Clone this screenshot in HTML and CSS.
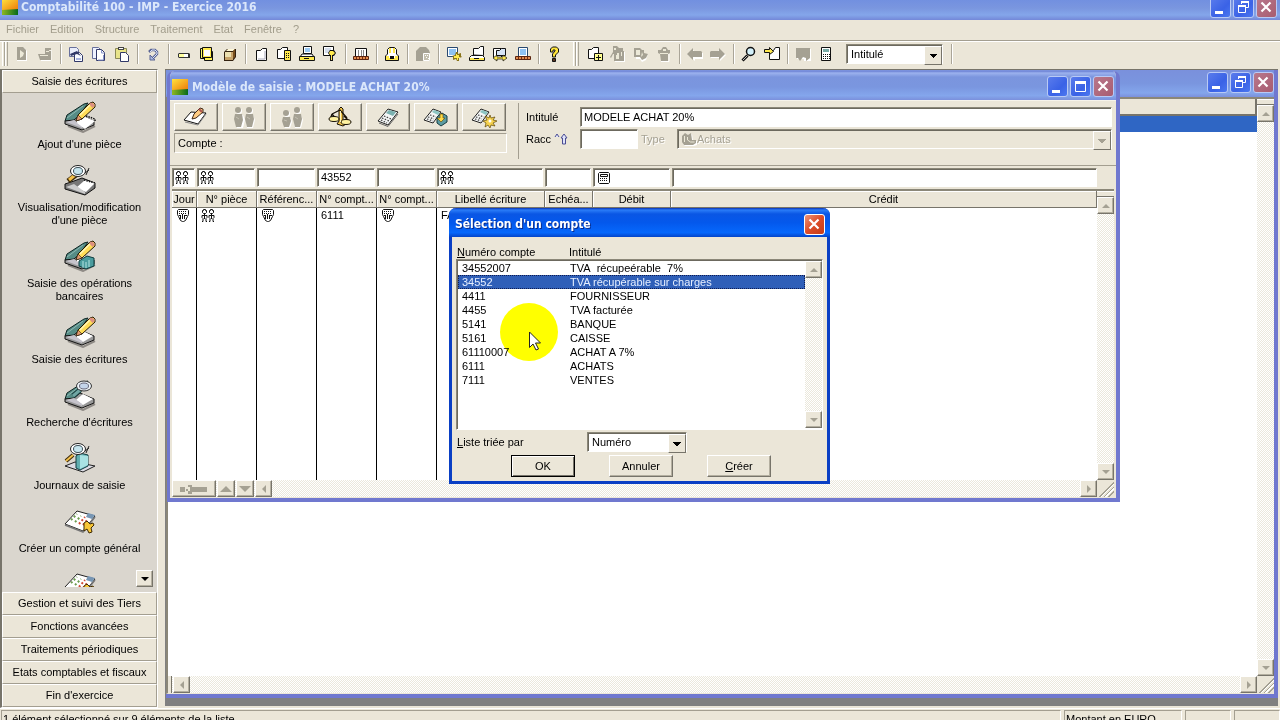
FILE: index.html
```html
<!DOCTYPE html>
<html lang="fr">
<head>
    <meta charset="UTF-8">
    <meta name="viewport" content="width=device-width, initial-scale=1.0">
    <title>Comptabilité 100 - IMP - Exercice 2016</title>
    <link rel="stylesheet" href="styles.css">
</head>
<body>
    <!-- Icon library -->
    <svg class="defs" aria-hidden="true">
        <defs>
            <linearGradient id="logoTop" x1="0" y1="0" x2="1" y2="1">
                <stop offset="0" stop-color="#ffe23c"/><stop offset="1" stop-color="#ee7a08"/>
            </linearGradient>
            <linearGradient id="logoBottom" x1="0" y1="0" x2="1" y2="0">
                <stop offset="0" stop-color="#8fb820"/><stop offset="1" stop-color="#066a1c"/>
            </linearGradient>
        </defs>
        <symbol id="logo" viewBox="0 0 16 16"><path d="M0 0h16v11H0z" fill="url(#logoTop)"/><path d="M0 11l16-1v6H0z" fill="url(#logoBottom)"/></symbol>
        <symbol id="win-min" viewBox="0 0 21 21"><path d="M5 14h8v3H5z" fill="#fff"/></symbol>
        <symbol id="win-max" viewBox="0 0 21 21"><path d="M5.5 6h10v9.500h-10z" fill="none" stroke="#fff"/><path d="M5 5h11v3H5z" fill="#fff"/></symbol>
        <symbol id="win-restore" viewBox="0 0 21 21"><path d="M8.500 7V4.500h7v6H13M5 9h7.500v6.500h-7V9" fill="none" stroke="#fff"/><path d="M5 8h8v2H5zM8 4h8v2H8z" fill="#fff"/></symbol>
        <symbol id="win-close" viewBox="0 0 21 21"><path d="M5.500 5.500l9 9m0-9l-9 9" stroke="#fff" stroke-width="2.200" fill="none"/></symbol>

        <symbol id="i-new" viewBox="0 0 16 16"><path d="M4 2h6l3 3v10H3V3z" fill="#fff"/><path d="M3 1h6l3 3v10H3z" fill="#a5a193"/><path d="M6 4l4 3-1 3-3 2z" fill="#ece9d8"/></symbol>
        <symbol id="i-open" viewBox="0 0 16 16"><path d="M2 8.500h9M4 14.500h10V4" stroke="#fff" fill="none"/><path d="M8 2h6v2h-2v1h2v9H3L1 8h7z" fill="#a5a193"/><path d="M3 9h8v1H3zM9 5h3v1H9z" fill="#ece9d8"/></symbol>
        <symbol id="i-cut" viewBox="0 0 16 16"><path d="M1.500 1.500h7l2 2v7h-9z" fill="#e8ecfa" stroke="#68709c"/><path d="M6.500 6.500h5l3 3v6h-8z" fill="#f8faff" stroke="#303868"/><path d="M2 8l7-3 4 5-4-2-6 2z" fill="#303868"/><path d="M8 12h5v2H8z" fill="#a8b4e0"/></symbol>
        <symbol id="i-copy" viewBox="0 0 16 16"><path d="M1.500 1.500h6l3 3v8h-9z" fill="#eef2ff" stroke="#68709c"/><path d="M5.500 3.500h5l3 3v8h-8z" fill="#fff" stroke="#303868"/><path d="M10.500 4v3h3M12.500 9v5H7" fill="none" stroke="#8894cc"/></symbol>
        <symbol id="i-paste" viewBox="0 0 16 16"><path d="M1.500 2.500h11v10h-11z" fill="#e8e48a" stroke="#8a8858"/><path d="M4 1h6v3H4z" fill="#444"/><path d="M5 2h4v1H5z" fill="#fff"/><path d="M6.500 6.500h5l3 3v6h-8z" fill="#fff" stroke="#303868"/></symbol>
        <symbol id="i-undo" viewBox="0 0 16 16"><path d="M4 6l2-2h4l2 2v2l-4 4" fill="none" stroke="#5a6494" stroke-width="2.500"/><path d="M5 6l2-2h3l2 2v2l-4 4" fill="none" stroke="#d8e2f8"/><path d="M5 9v5h5z" fill="#aab8e0" stroke="#5a6494"/></symbol>
        <symbol id="i-pill" viewBox="0 0 16 16"><path d="M3 7h10l1 1v4H3l-1-1V8z" fill="#333"/><path d="M3 8h5v3H3z" fill="#ffffa0"/><path d="M8 8h4v3H8z" fill="#fff"/></symbol>
        <symbol id="i-cards" viewBox="0 0 16 16"><path d="M1.500 2.500h9v10h-9z" fill="#ffff70" stroke="#111"/><path d="M5.500 5.500h8v9h-8z" fill="#fff352" stroke="#111"/><path d="M3.500 1.500h9v10h-9z" fill="#ffe94e" stroke="#111"/><path d="M5 4h6v6H5z" fill="#fff"/></symbol>
        <symbol id="i-box" viewBox="0 0 16 16"><path d="M2 6l3-3h9v8l-3 4H2z" fill="#332210"/><path d="M3 6h8v8H3z" fill="#c8a46a"/><path d="M4 5l2-2h7l-2 2z" fill="#fff8d8"/><path d="M11 5l2-2v8l-2 2z" fill="#79501e"/><path d="M3 6h6v5H3z" fill="#ece0b0"/></symbol>
        <symbol id="i-folder" viewBox="0 0 16 16"><path d="M3.500 4.500h4l2-2h4v12h-10z" fill="#fff" stroke="#111"/><path d="M5 13h7V5" fill="none" stroke="#aab"/></symbol>
        <symbol id="i-folder-calc" viewBox="0 0 16 16"><path d="M1.500 3.500h3l2-2h5v11h-10z" fill="#fff" stroke="#111"/><path d="M8.500 4.500h6v10h-6z" fill="#ffe94e" stroke="#111"/><path d="M10 7h1v1h-1zm2 0h1v1h-1zm-2 2h1v1h-1zm2 0h1v1h-1zm-2 2h1v1h-1zm2 0h1v1h-1z" fill="#111"/></symbol>
        <symbol id="i-print" viewBox="0 0 16 16"><path d="M4.500 .500h8v7h-8z" fill="#fff" stroke="#111"/><path d="M6 2h5v4H6z" fill="#9ccaf4"/><path d="M3 8h10l2 3H1z" fill="#fff" stroke="#111"/><path d="M.500 10.500h15v4H.500z" fill="#ffe94e" stroke="#111"/><path d="M5 12h5v1H5z" fill="#111"/></symbol>
        <symbol id="i-key" viewBox="0 0 16 16"><path d="M1.500 .500h10v9h-10z" fill="#fff" stroke="#111"/><path d="M3 2h6v5H3z" fill="#d4ddeb"/><path d="M8 4h4l2 3-2 3h-1v5H8v-5L6 7z" fill="#111"/><path d="M8 5h3l2 2-2 2H8L7 7zM9 9h1v5H9z" fill="#ffe94e"/></symbol>
        <symbol id="i-bank" viewBox="0 0 16 16"><path d="M2.500 2.500h11v8h-11z" fill="#fff" stroke="#111"/><path d="M5.500 4v6M8.500 4v6M10.500 4v6" stroke="#888"/><path d="M.500 10.500h15v3H.500z" fill="#e28a4c" stroke="#5a2410"/><path d="M3.500 11v2m3-2v2m3-2v2m3-2v2" stroke="#702c10"/></symbol>
        <symbol id="i-car" viewBox="0 0 16 16"><path d="M3.500 8V3.500l2-2h5l2 2V8l2 2v4.500h-13V10z" fill="#fff" stroke="#111"/><path d="M5 2h2v5H5zm4 0h2v5H9z" fill="#ffe84b"/><path d="M2 10h3v2H2zm9 0h3v2h-3z" fill="#ffe84b"/><path d="M2 12h12v2H2z" fill="#ffe84b"/><path d="M6 10h4v3H6z" fill="#111"/></symbol>
        <symbol id="i-globe" viewBox="0 0 16 16"><path d="M5 1h6l3 3 1 3v8H5H1V5z" fill="#a5a193"/><path d="M8.500 7.500h6v7h-6z" fill="#c4c0b0" stroke="#fff"/><path d="M10 9h1v1h-1zm2 0h1v1h-1zm-1 2h1v1h-1zm2 1h1v1h-1z" fill="#fff"/></symbol>
        <symbol id="i-screen-gear" viewBox="0 0 16 16"><path d="M1.500 1.500h10v9h-10z" fill="#fff" stroke="#29486e"/><path d="M3 3h7v6H3z" fill="#8fc2f2"/><path d="M10 6h2v2l3-1v3l1 1-3 1v3h-2l-1-2-3 1v-3l-1-1 3-1z" fill="#8a7418"/><path d="M10 8h1v1h2v2h1v1h-2v2h-1v-2H8v-2h2z" fill="#ffe94e"/></symbol>
        <symbol id="i-screen-print" viewBox="0 0 16 16"><path d="M4.500 9V2.500h5l2-2h3v9z" fill="#fff" stroke="#111"/><path d="M2.500 9.500h11l2 2v3H.500v-3z" fill="#fff" stroke="#111"/><path d="M1 12h14v2H1z" fill="#ffe84b"/><path d="M5 12h5v1H5z" fill="#111"/></symbol>
        <symbol id="i-copy-arrow" viewBox="0 0 16 16"><path d="M1.500 2.500h8v9h-8z" fill="#fff" stroke="#111"/><path d="M4.500 4.500h3l2-2h4v7h-9z" fill="#d7e4f5" stroke="#111"/><path d="M1 12l4-3v2h6V9l4 3-4 3v-2H5v2z" fill="#ffe94e" stroke="#111" stroke-width=".700"/></symbol>
        <symbol id="i-screen-bank" viewBox="0 0 16 16"><path d="M3.500 1.500h9v9h-9z" fill="#fff" stroke="#29486e"/><path d="M5 3h6v6H5z" fill="#8fc2f2"/><path d="M.500 10.500h15v3H.500z" fill="#e28a4c" stroke="#5a2410"/><path d="M3.500 11v2m3-2v2m3-2v2m3-2v2" stroke="#702c10"/></symbol>
        <symbol id="i-help" viewBox="0 0 16 16"><path d="M4.500 5V3l2-2h4l2 2v3L9.500 9v2h-3V8L9 5V4H7v2H4.500z" fill="#ffe53b" stroke="#111"/><path d="M6.500 12.500h3v3h-3z" fill="#5a3420" stroke="#111"/></symbol>
        <symbol id="i-add" viewBox="0 0 16 16"><path d="M1.500 3.500h3l2-2h5v11h-10z" fill="#fff" stroke="#111"/><path d="M7.500 7.500h8v7h-8z" fill="#ffff90" stroke="#111"/><path d="M11 9h1v2h2v1h-2v2h-1v-2H9v-1h2z" fill="#111"/></symbol>
        <symbol id="i-g-view" viewBox="0 0 16 16"><path d="M6 6h9v10H5V9z" fill="#fff"/><path d="M3 0h4l2 2h4v3h1v10H4V8H3l-2 4-1-1 3-5z" fill="#a5a193"/><path d="M4 2h2v2H4zM7 7h2v6H6V9h1zm4-1h1v4h-1z" fill="#ece9d8"/></symbol>
        <symbol id="i-g-edit" viewBox="0 0 16 16"><path d="M3 4h8v4h4l-2 6-4 2-2-3H3z" fill="#fff"/><path d="M1 2h6l2 2h2v3l4 1-2 4-4 2-2-3H1z" fill="#a5a193"/><path d="M3 4h4v5H3zM9 6l1 3-2 2z" fill="#ece9d8"/></symbol>
        <symbol id="i-g-trash" viewBox="0 0 16 16"><path d="M5 15.500h8V8" fill="none" stroke="#fff"/><path d="M2 4h3l2-3h3l2 3h2v3l-2 1v7H5l-1-7-2-1z" fill="#a5a193"/><path d="M7 3h3v2H7zM4 7h8v1H4z" fill="#ece9d8"/></symbol>
        <symbol id="i-left" viewBox="0 0 16 16"><path d="M1 9l6-5v3h9v6H8v2z" fill="#fff"/><path d="M0 8l6-6v3h8l1 1v5H6v3z" fill="#a5a193"/></symbol>
        <symbol id="i-right" viewBox="0 0 16 16"><path d="M16 9l-6 6v-3H1V8l9-4z" fill="#fff"/><path d="M15 8L9 2v3H1L0 6v5h9v3z" fill="#a5a193"/></symbol>
        <symbol id="i-search" viewBox="0 0 16 16"><path d="M1.500 14.500l5-5" stroke="#111" stroke-width="3"/><circle cx="9.500" cy="5.500" r="4" fill="#d3f0fa" stroke="#111" stroke-width="1.500"/><path d="M2 14l4-4" stroke="#bbb"/></symbol>
        <symbol id="i-goto" viewBox="0 0 16 16"><path d="M5.500 4.500h4l2-3h4v12h-10z" fill="#fff" stroke="#111"/><path d="M.500 3.500h5v-2l4 4-4 3v-2h-5z" fill="#ffe94e" stroke="#111"/></symbol>
        <symbol id="i-g-book" viewBox="0 0 16 16"><path d="M2 3h14v12H9v-2H2z" fill="#fff"/><path d="M1 2h14v10l-4 3v-3l-3-1-3 4-2-3H1z" fill="#a5a193"/></symbol>
        <symbol id="i-calc" viewBox="0 0 16 16"><path d="M3.500 1.500h9v13h-9z" fill="#fff" stroke="#111"/><path d="M5 3h6v3H5z" fill="#78aaa6"/><path d="M5 8h1v1H5zm2 0h1v1H7zm2 0h1v1H9zm2 0h1v1h-1zm-6 2h1v1H5zm2 0h1v1H7zm2 0h1v1H9zm2 0h1v1h-1zm-6 2h1v1H5zm2 0h1v1H7zm2 0h1v1H9zm2 0h1v1h-1z" fill="#111"/></symbol>

        <!-- Sidebar icons -->
        <symbol id="book" viewBox="0 0 32 32"><path d="M4 25l15 6 12-6" fill="none" stroke="#8f8b86" stroke-width="2"/><path d="M1 20l2-6L20 3l4-1-8 12-4 6z" fill="#568c86" stroke="#0c2422"/><path d="M3 17L19 5" stroke="#8fbab4"/><path d="M1 20l9-1 6-5 14 6v4l-12 5L1 23z" fill="#999" stroke="#111"/><path d="M12 21l7-6 10 5-10 6z" fill="#fff"/><path d="M2 21l8-2 8 6v2z" fill="#c6c4cc"/></symbol>
        <symbol id="pencil" viewBox="0 0 32 32"><path d="M12 20l2-6L26 2l3-1 2 2v3L18 18z" fill="#ffdc56" stroke="#241a06"/><path d="M16 14L26 4" stroke="#fff6b8" stroke-width="1.500"/><path d="M25 3l2-1.500 3.500 1.500v2l-2 2z" fill="#dc8f80"/><path d="M12 20l2-6 4 4z" fill="#e39a72" stroke="#241a06" stroke-width=".600"/></symbol>
        <symbol id="lens" viewBox="0 0 32 32"><path d="M21 9l4-3M22 11l3-7" stroke="#222"/><ellipse cx="14" cy="7" rx="7.500" ry="5.500" fill="#fff" stroke="#222"/><ellipse cx="14" cy="7" rx="4.500" ry="3.500" fill="#c6e5ee" stroke="#3c5058"/></symbol>
        <symbol id="s-add" viewBox="0 0 32 32"><use href="#book"/><path d="M13 22l8-6 10 4-10 8z" fill="#fff"/><path d="M22 15l9 3v3" fill="none" stroke="#111" stroke-width="1.500" stroke-dasharray="1.500 1"/><use href="#pencil"/></symbol>
        <symbol id="s-view" viewBox="0 0 32 32"><path d="M1 20l9-3 8-3 13 5v5l-10 7L1 25z" fill="#777" stroke="#111"/><path d="M12 24l9-8 10 3-9 9z" fill="#fff"/><path d="M20 16l11 3" stroke="#111" stroke-width="1.500" stroke-dasharray="1.500 1"/><path d="M2 23l8-3 11 8v2z" fill="#ccc"/><path d="M4 17l8-6" stroke="#3b2807" stroke-width="5"/><path d="M5 16l6-5" stroke="#f2c04c" stroke-width="3"/><use href="#lens"/></symbol>
        <symbol id="s-bank" viewBox="0 0 32 32"><use href="#book"/><path d="M15 21l8-5 7 2v8l-8 3-7-3z" fill="#4b9c9e" stroke="#0d3b3d"/><path d="M19 21v7m3-6v6m3-8v7" stroke="#b7e5e3"/><use href="#pencil"/></symbol>
        <symbol id="s-write" viewBox="0 0 32 32"><use href="#book"/><use href="#pencil"/></symbol>
        <symbol id="s-search" viewBox="0 0 32 32"><use href="#book"/><path d="M9 17l7-6" stroke="#183f3f" stroke-width="5"/><path d="M9 17l7-6" stroke="#70a6a4" stroke-width="3"/><ellipse cx="20" cy="7" rx="7.500" ry="5" fill="#eef5fa" stroke="#333"/><ellipse cx="20" cy="7" rx="4.500" ry="3" fill="#c4d5ea" stroke="#667"/></symbol>
        <symbol id="s-journal" viewBox="0 0 32 32"><path d="M1 24l10-4 20 4-12 6z" fill="#dcdce4" stroke="#222"/><path d="M12 14l4-3 8 2v11l-8 4-4-2z" fill="#60aeb0" stroke="#133c40"/><path d="M16 13l8 1v9l-8 4z" fill="#a9e3e3"/><path d="M2 19l7-6" stroke="#3b2807" stroke-width="4"/><path d="M2 19l7-6" stroke="#f2c04c" stroke-width="2"/><use href="#lens"/></symbol>
        <symbol id="s-account" viewBox="0 0 32 32"><path d="M1 19L13 6l18 5-12 15z" fill="#fff" stroke="#222"/><path d="M1 20l18 7 12-15" fill="none" stroke="#777" stroke-width="1.500"/><path d="M7 15l6-6M11 17l6-6" stroke="#6d9c50" stroke-dasharray="2 2" stroke-width="2"/><path d="M15 19l6-7M19 20l5-6" stroke="#d04a35" stroke-dasharray="2 2" stroke-width="2"/><path d="M24 8l7 2-3 4-6-2z" fill="#7796b4"/><path d="M20 18l3-2 3 3 3-1 1 2-3 3 1 4-3 1-2-4-3 2z" fill="#f8c636" stroke="#3d2a05"/></symbol>

        <!-- Model window icons -->
        <symbol id="m-pencil" viewBox="0 0 26 22"><path d="M1 14L8 6l15 1-8 11z" fill="#fff" stroke="#111"/><path d="M2 16l13 3 8-11" fill="none" stroke="#888"/><path d="M9 13l2-5 6-6 3 1v3l-7 6z" fill="#ffcc83" stroke="#402818"/><path d="M16 3l3 3" stroke="#ad5550" stroke-width="2"/></symbol>
        <symbol id="m-people" viewBox="0 0 26 22"><g fill="#fff"><circle cx="8" cy="5" r="3"/><circle cx="19" cy="5" r="3"/><path d="M5 9h7l2 5-2 8H6l-2-8zM16 9h6l2 5-2 8h-6l-1-8z"/></g><g fill="#a5a193"><circle cx="7" cy="4" r="3"/><circle cx="18" cy="4" r="3"/><path d="M4 8h7l1 6-2 7H5l-2-8zM15 8h7l1 5-2 8h-5l-2-8z"/></g><path d="M5 11l3 2M16 11l3 2" stroke="#c4c0b2"/></symbol>
        <symbol id="m-people2" viewBox="0 0 26 22"><g fill="#fff"><circle cx="8" cy="8" r="3"/><circle cx="19" cy="5" r="3"/><path d="M5 12h7l1 4-2 6H6l-2-6zM16 9h6l2 5-2 8h-6l-1-8z"/></g><g fill="#a5a193"><circle cx="7" cy="7" r="3"/><circle cx="18" cy="4" r="3"/><path d="M4 11h7l1 4-2 6H5l-2-6zM15 8h7l1 5-2 8h-5l-2-8z"/></g><path d="M5 14l3 1M16 11l3 2" stroke="#c4c0b2"/></symbol>
        <symbol id="m-scale" viewBox="0 0 26 22"><path d="M12 3l2-2 2 2v11l3 4-3 2-6-2 2-3z" fill="#f5c84c" stroke="#161006"/><path d="M5 8l8-4 7 8M5 8l-2 6M5 8l5 6M17 10l6 6" fill="none" stroke="#161006" stroke-width="1.300"/><ellipse cx="7" cy="13" rx="5" ry="2.500" fill="#fff2a0" stroke="#161006"/><ellipse cx="19" cy="16" rx="5" ry="2.500" fill="#fff2a0" stroke="#161006"/><path d="M13.500 5v11" stroke="#fff6c0"/></symbol>
        <symbol id="m-calc" viewBox="0 0 26 22"><path d="M3 15L13 3l10 3-10 13z" fill="#f4f6f6" stroke="#222"/><path d="M4 17l9 3.500L23 8" fill="none" stroke="#666"/><path d="M11 7l3-3 7 2-3 4z" fill="#7bb2b0"/><path d="M7 12l7 3M9 10l7 3M6 14l6 3" stroke="#444" stroke-dasharray="1.500 1.500" stroke-width="1.300"/></symbol>
        <symbol id="m-calc-book" viewBox="0 0 26 22"><path d="M1 14L10 3l8 3-8 11z" fill="#f4f6f6" stroke="#222"/><path d="M9 6l2-2 6 2-2 3z" fill="#8cc5c3"/><path d="M5 11l6 2M7 9l6 2M4 13l6 2" stroke="#444" stroke-dasharray="1.500 1.500" stroke-width="1.300"/><path d="M14 11l5-4 5 3v6l-6 4-4-3z" fill="#5b9ba1" stroke="#173b40"/><path d="M17 8h3v4h2l-4 4-4-4h3z" fill="#ffda48" stroke="#5a4300" stroke-width=".600"/></symbol>
        <symbol id="m-calc-gear" viewBox="0 0 26 22"><path d="M1 14L10 3l8 3-8 11z" fill="#f4f6f6" stroke="#222"/><path d="M9 6l2-2 6 2-2 3z" fill="#8cc5c3"/><path d="M5 11l6 2M7 9l6 2M4 13l6 2" stroke="#444" stroke-dasharray="1.500 1.500" stroke-width="1.300"/><path d="M19 9l1 3 4-1-2 3 4 1-4 2 2 3-4-1-1 3-2-3-3 2 1-4-3-2 4-1-2-4 4 2z" fill="#f5d14e" stroke="#5e4706" stroke-width=".700"/><circle cx="19" cy="15" r="1.500" fill="#fff"/></symbol>
        <symbol id="people" viewBox="0 0 14 14"><g fill="none" stroke="#111"><path d="M1.500 1.500h1v-1h2v1h1v2l-1 1h-2l-1-1zM8.500 1.500h1v-1h2v1h1v2l-1 1h-2l-1-1zM1 6.500h5v2l-1 1v3h1M1 6.500v2l1 1v3H1M8 6.500h5v2l-1 1v3h1M8 6.500v2l1 1v3H8M3.500 5v5M10.500 5v5"/></g></symbol>
        <symbol id="pot" viewBox="0 0 14 14"><path d="M1.500 1.500l1-1h9l1 1v4l-1 2-2 4-2 1h-1l-2-1-2-4-1-2z" fill="#fff" stroke="#111"/><path d="M3 2.500h8M3 4.500h8" stroke="#111" fill="none" stroke-dasharray="1 1"/><path d="M4.500 6v4M6.500 5v5M8.500 6v4M3 6.500h2M9 6.500h2" stroke="#111"/></symbol>
        <symbol id="minicalc" viewBox="0 0 12 12"><path d="M.500 1.500l1-1h9l1 1v9l-1 1h-9l-1-1z" fill="#fff" stroke="#111"/><path d="M2.500 2.500h7v2h-7z" fill="none" stroke="#111"/><path d="M2 6.500h8M2 8.500h8" stroke="#111" stroke-dasharray="1 1"/></symbol>
        <symbol id="basket" viewBox="0 0 16 14"><path d="M2 5l3-3 3 2 3-2 1 7h4v4l-3 1H4l-2-2z" fill="#fff"/><path d="M1 4l3-3 3 2 3-2 1 7h4v3l-3 2H3l-2-3z" fill="#a5a193"/><path d="M3.500 4v6M6.500 5v3l3 2h4" fill="none" stroke="#ece9d8"/></symbol>
        <symbol id="sliders" viewBox="0 0 30 12"><path d="M1 4h5v5H1zM7 6h2V2h4v2h15v5H13v2h-4V8H7z" fill="#a5a193"/><path d="M9 4h2v4H9z" fill="#ece9d8"/></symbol>
    </svg>

    <header class="titlebar app-title">
        <svg class="logo"><use href="#logo"/></svg>
        <h1>Comptabilité 100 - IMP - Exercice 2016</h1>
        <div class="window-buttons">
            <button aria-label="Réduire"><svg><use href="#win-min"/></svg></button>
            <button aria-label="Restaurer"><svg><use href="#win-restore"/></svg></button>
            <button class="close" aria-label="Fermer"><svg><use href="#win-close"/></svg></button>
        </div>
    </header>

    <nav class="menubar">
        <button>Fichier</button>
        <button>Edition</button>
        <button>Structure</button>
        <button>Traitement</button>
        <button>Etat</button>
        <button>Fenêtre</button>
        <button>?</button>
    </nav>

    <div class="toolbar">
        <span class="grip"></span>
        <button aria-label="Nouveau"><svg><use href="#i-new"/></svg></button>
        <button aria-label="Ouvrir"><svg><use href="#i-open"/></svg></button>
        <span class="sep"></span>
        <button aria-label="Couper"><svg><use href="#i-cut"/></svg></button>
        <button aria-label="Copier"><svg><use href="#i-copy"/></svg></button>
        <button aria-label="Coller"><svg><use href="#i-paste"/></svg></button>
        <span class="sep"></span>
        <button aria-label="Annuler"><svg><use href="#i-undo"/></svg></button>
        <span class="sep"></span>
        <button aria-label="Plan comptable"><svg><use href="#i-pill"/></svg></button>
        <button aria-label="Plan tiers"><svg><use href="#i-cards"/></svg></button>
        <button aria-label="Codes journaux"><svg><use href="#i-box"/></svg></button>
        <span class="sep"></span>
        <button aria-label="Journaux"><svg><use href="#i-folder"/></svg></button>
        <button aria-label="Saisie"><svg><use href="#i-folder-calc"/></svg></button>
        <button aria-label="Imprimer"><svg><use href="#i-print"/></svg></button>
        <button aria-label="Clôture"><svg><use href="#i-key"/></svg></button>
        <span class="sep"></span>
        <button aria-label="Banques"><svg><use href="#i-bank"/></svg></button>
        <span class="sep"></span>
        <button aria-label="Règlements"><svg><use href="#i-car"/></svg></button>
        <span class="sep"></span>
        <button aria-label="Internet"><svg><use href="#i-globe"/></svg></button>
        <span class="sep"></span>
        <button aria-label="Paramètres"><svg><use href="#i-screen-gear"/></svg></button>
        <button aria-label="Etats"><svg><use href="#i-screen-print"/></svg></button>
        <button aria-label="Transfert"><svg><use href="#i-copy-arrow"/></svg></button>
        <button aria-label="Rapprochement"><svg><use href="#i-screen-bank"/></svg></button>
        <span class="sep"></span>
        <button aria-label="Aide"><svg><use href="#i-help"/></svg></button>
        <span class="grip grip-second"></span>
        <button aria-label="Ajouter"><svg><use href="#i-add"/></svg></button>
        <button aria-label="Voir"><svg><use href="#i-g-view"/></svg></button>
        <button aria-label="Modifier"><svg><use href="#i-g-edit"/></svg></button>
        <button aria-label="Supprimer"><svg><use href="#i-g-trash"/></svg></button>
        <span class="sep"></span>
        <button aria-label="Précédent"><svg><use href="#i-left"/></svg></button>
        <button aria-label="Suivant"><svg><use href="#i-right"/></svg></button>
        <span class="sep"></span>
        <button aria-label="Rechercher"><svg><use href="#i-search"/></svg></button>
        <button aria-label="Atteindre"><svg><use href="#i-goto"/></svg></button>
        <span class="sep"></span>
        <button aria-label="Aide-mémoire"><svg><use href="#i-g-book"/></svg></button>
        <button aria-label="Calculatrice"><svg><use href="#i-calc"/></svg></button>
        <div class="combo toolbar-combo">
            <select aria-label="Tri"><option>Intitulé</option></select>
        </div>
        <span class="sep"></span>
    </div>

    <main>
        <aside class="sidebar">
            <button class="group">Saisie des écritures</button>
            <div class="shortcuts">
                <button class="shortcut"><svg><use href="#s-add"/></svg>Ajout d'une pièce</button>
                <button class="shortcut"><svg><use href="#s-view"/></svg>Visualisation/modification<br>d'une pièce</button>
                <button class="shortcut"><svg><use href="#s-bank"/></svg>Saisie des opérations<br>bancaires</button>
                <button class="shortcut"><svg><use href="#s-write"/></svg>Saisie des écritures</button>
                <button class="shortcut"><svg><use href="#s-search"/></svg>Recherche d'écritures</button>
                <button class="shortcut"><svg><use href="#s-journal"/></svg>Journaux de saisie</button>
                <button class="shortcut"><svg><use href="#s-account"/></svg>Créer un compte général</button>
                <button class="shortcut" aria-label="Suite"><svg><use href="#s-account"/></svg></button>
                <button class="arrow down active more" aria-label="Défiler"></button>
            </div>
            <button class="group">Gestion et suivi des Tiers</button>
            <button class="group">Fonctions avancées</button>
            <button class="group">Traitements périodiques</button>
            <button class="group">Etats comptables et fiscaux</button>
            <button class="group">Fin d'exercice</button>
        </aside>

        <div class="workspace">
            <section class="journal">
                <div class="titlebar journal-title">
                    <div class="window-buttons">
                        <button aria-label="Réduire"><svg><use href="#win-min"/></svg></button>
                        <button aria-label="Restaurer"><svg><use href="#win-restore"/></svg></button>
                        <button class="close" aria-label="Fermer"><svg><use href="#win-close"/></svg></button>
                    </div>
                </div>
                <div class="scroll-frame">
                    <div class="journal-list">
                        <div class="journal-head"></div>
                        <div class="journal-selected"></div>
                    </div>
                    <div class="vscroll">
                        <span class="splitter"></span>
                        <button class="arrow up" aria-label="Haut"></button>
                        <button class="arrow down last" aria-label="Bas"></button>
                    </div>
                    <div class="hscroll">
                        <span class="vsplitter"></span>
                        <button class="arrow left" aria-label="Gauche"></button>
                        <button class="arrow right last" aria-label="Droite"></button>
                    </div>
                    <span class="sizer"></span>
                </div>
            </section>

            <section class="model">
                <div class="titlebar">
                    <svg class="logo"><use href="#logo"/></svg>
                    <h2>Modèle de saisie : MODELE ACHAT 20%</h2>
                    <div class="window-buttons">
                        <button aria-label="Réduire"><svg><use href="#win-min"/></svg></button>
                        <button aria-label="Agrandir"><svg><use href="#win-max"/></svg></button>
                        <button class="close" aria-label="Fermer"><svg><use href="#win-close"/></svg></button>
                    </div>
                </div>
                <div class="model-head">
                    <div class="model-tools">
                        <div class="tool-row">
                            <button aria-label="Modifier"><svg><use href="#m-pencil"/></svg></button>
                            <button aria-label="Tiers"><svg><use href="#m-people"/></svg></button>
                            <button aria-label="Tiers liés"><svg><use href="#m-people2"/></svg></button>
                            <button aria-label="Equilibrer"><svg><use href="#m-scale"/></svg></button>
                            <button aria-label="Calculer"><svg><use href="#m-calc"/></svg></button>
                            <button aria-label="Enregistrer"><svg><use href="#m-calc-book"/></svg></button>
                            <button aria-label="Options"><svg><use href="#m-calc-gear"/></svg></button>
                        </div>
                        <div class="account-box">Compte :</div>
                    </div>
                    <div class="model-fields">
                        <label for="title">Intitulé</label>
                        <input type="text" id="title" class="sunken" value="MODELE ACHAT 20%">
                        <label for="shortcut">Racc <svg class="shift" viewBox="0 0 14 12"><path d="M1 4l2-3 2 3M10 1l3 4h-1.500v6h-3V5H7z" fill="#dfe3fa" stroke="#4a4c92"/></svg></label>
                        <div class="field-row">
                            <input type="text" id="shortcut" class="sunken short">
                            <label for="type" class="disabled">Type</label>
                            <div class="combo type-combo">
                                <svg><use href="#basket"/></svg>
                                <select id="type" disabled><option>Achats</option></select>
                            </div>
                        </div>
                    </div>
                </div>
                <div class="filters">
                    <div class="sunken"><svg><use href="#people"/></svg></div>
                    <div class="sunken"><svg><use href="#people"/></svg><input type="text" aria-label="N° pièce"></div>
                    <input type="text" class="sunken" aria-label="Référence">
                    <input type="text" class="sunken" aria-label="N° compte général" value="43552">
                    <input type="text" class="sunken" aria-label="N° compte tiers">
                    <div class="sunken"><svg><use href="#people"/></svg><input type="text" aria-label="Libellé écriture"></div>
                    <input type="text" class="sunken" aria-label="Echéance">
                    <div class="sunken"><svg class="mini"><use href="#minicalc"/></svg><input type="text" aria-label="Débit"></div>
                    <input type="text" class="sunken" aria-label="Crédit">
                </div>
                <div class="scroll-frame">
                    <table class="entries">
                        <colgroup>
                            <col class="c-day"><col class="c-id"><col class="c-id"><col class="c-id"><col class="c-id"><col class="c-label"><col class="c-due"><col class="c-debit"><col>
                        </colgroup>
                        <thead>
                            <tr>
                                <th>Jour</th>
                                <th>N° pièce</th>
                                <th>Référenc...</th>
                                <th>N° compt...</th>
                                <th>N° compt...</th>
                                <th>Libellé écriture</th>
                                <th>Echéa...</th>
                                <th>Débit</th>
                                <th>Crédit</th>
                            </tr>
                        </thead>
                        <tbody>
                            <tr>
                                <td><svg><use href="#pot"/></svg></td>
                                <td><svg><use href="#people"/></svg></td>
                                <td><svg><use href="#pot"/></svg></td>
                                <td>6111</td>
                                <td><svg><use href="#pot"/></svg></td>
                                <td>FA</td>
                                <td></td>
                                <td></td>
                                <td></td>
                            </tr>
                        </tbody>
                    </table>
                    <div class="vscroll">
                        <span class="splitter"></span>
                        <button class="arrow up" aria-label="Haut"></button>
                        <button class="arrow down last" aria-label="Bas"></button>
                    </div>
                    <div class="hscroll">
                        <button class="arrow wide" aria-label="Colonnes"><svg><use href="#sliders"/></svg></button>
                        <button class="arrow up big" aria-label="Monter"></button>
                        <button class="arrow down big" aria-label="Descendre"></button>
                        <button class="arrow left" aria-label="Gauche"></button>
                        <button class="arrow right last" aria-label="Droite"></button>
                    </div>
                    <span class="sizer"></span>
                </div>
            </section>
        </div>
    </main>

    <footer class="statusbar">
        <span class="status-text">1 élément sélectionné sur 9 éléments de la liste</span>
        <span class="status-currency">Montant en EURO</span>
        <span class="status-small"></span>
        <span class="status-small"></span>
    </footer>

    <section class="dialog" role="dialog" aria-labelledby="dialogTitle">
        <div class="titlebar">
            <h2 id="dialogTitle">Sélection d'un compte</h2>
            <div class="window-buttons">
                <button class="close" aria-label="Fermer"><svg><use href="#win-close"/></svg></button>
            </div>
        </div>
        <div class="dialog-body">
            <div class="list-labels"><span><u>N</u>uméro compte</span><span>Intitulé</span></div>
            <div class="account-list sunken">
                <table>
                    <tbody>
                        <tr><td>34552007</td><td>TVA&nbsp; récupeérable&nbsp; 7%</td></tr>
                        <tr class="selected"><td>34552</td><td>TVA récupérable sur charges</td></tr>
                        <tr><td>4411</td><td>FOURNISSEUR</td></tr>
                        <tr><td>4455</td><td>TVA facturée</td></tr>
                        <tr><td>5141</td><td>BANQUE</td></tr>
                        <tr><td>5161</td><td>CAISSE</td></tr>
                        <tr><td>61110007</td><td>ACHAT A 7%</td></tr>
                        <tr><td>6111</td><td>ACHATS</td></tr>
                        <tr><td>7111</td><td>VENTES</td></tr>
                    </tbody>
                </table>
                <div class="vscroll">
                    <button class="arrow up" aria-label="Haut"></button>
                    <button class="arrow down last" aria-label="Bas"></button>
                </div>
            </div>
            <div class="sort-row">
                <label for="sort"><u>L</u>iste triée par</label>
                <div class="combo sort-combo">
                    <select id="sort"><option>Numéro</option></select>
                </div>
            </div>
            <div class="dialog-buttons">
                <button class="default">OK</button>
                <button>Annuler</button>
                <button><u>C</u>réer</button>
            </div>
        </div>
        <span class="halo"></span>
        <svg class="pointer" viewBox="0 0 13 20"><path d="M.500 1v15.500l3.500-3.500 3 6 2.500-1-3-6h5z" fill="#fff" stroke="#222"/></svg>
    </section>
</body>
</html>
```

FILE: styles.css
```css
* {
    box-sizing: border-box;
}
body {
    margin: 0;
    height: 100vh;
    display: flex;
    flex-direction: column;
    overflow: hidden;
    position: relative;
    background: #ebe6d8;
    color: #000;
    font-family: "Liberation Sans", Arial, sans-serif;
    font-size: 11px;
    line-height: 13px;
}
button, input, select {
    font: inherit;
    color: inherit;
    margin: 0;
    padding: 0;
    border: none;
    border-radius: 0;
    background: none;
    min-width: 0;
}
svg {
    display: block;
    flex: none;
}
.defs {
    position: absolute;
    width: 0;
    height: 0;
}

/* Title bars */
.titlebar {
    display: flex;
    align-items: center;
    flex: none;
    height: 29px;
    padding: 2px 4px 0 5px;
    background: linear-gradient(#6a7fd4 0, #9cb2ee 2px, #7b95de 6px, #7a96df 55%, #84a6ec 85%, #7b90dc 100%);
    color: #dbe7fb;
}
.titlebar h1, .titlebar h2 {
    margin: 0;
    flex: 1;
    font-family: "DejaVu Sans Condensed", "DejaVu Sans", sans-serif;
    font-size: 12px;
    font-weight: bold;
    line-height: 16px;
    white-space: nowrap;
}
.logo {
    width: 16px;
    height: 16px;
    margin-right: 4px;
}
.app-title {
    height: 20px;
    padding: 0 3px 6px 2px;
    background: linear-gradient(#7290e0, #7a96df 40%, #84a6ea 75%, #7488d8);
}
.app-title .logo {
    margin-right: 3px;
}
.window-buttons {
    display: flex;
    gap: 2px;
    margin-left: auto;
}
.window-buttons button {
    width: 21px;
    height: 21px;
    border: 1px solid #b9caf5;
    border-radius: 3px;
    background: linear-gradient(135deg, #5a7cec, #3a62e6 60%, #4c78f0);
}
.window-buttons button.close {
    background: linear-gradient(135deg, #b8788c, #a85c70);
}
.window-buttons svg {
    width: 21px;
    height: 21px;
    margin: -1px;
}

/* Menu and toolbar */
.menubar {
    display: flex;
    align-items: center;
    flex: none;
    gap: 11px;
    height: 20px;
    padding: 0 6px 1px;
    color: #a29d8c;
}
.toolbar {
    display: flex;
    align-items: center;
    flex: none;
    height: 29px;
    padding-bottom: 2px;
    border-top: 1px solid #a39e90;
    box-shadow: inset 0 1px #fff;
}
.toolbar button {
    width: 23px;
    height: 24px;
    display: flex;
    align-items: center;
    justify-content: center;
}
.toolbar svg {
    width: 16px;
    height: 16px;
}
.sep {
    width: 8px;
    height: 20px;
    flex: none;
    background: linear-gradient(90deg, #aaa598 1px, #fff 1px) 4px 0 / 2px 100% no-repeat;
}
.grip {
    width: 10px;
    height: 24px;
    flex: none;
    background: repeating-linear-gradient(90deg, #fff 0 1px, #ebe6d8 1px 2px, #aaa598 2px 3px) 2px 0 / 6px 100% no-repeat;
}
.grip-second {
    width: 18px;
    background-position: 8px 0;
}

/* Sunken fields and drop-downs */
.sunken, .combo {
    background: #fff;
    border: 1px solid;
    border-color: #8b8778 #fff #fff #8b8778;
    box-shadow: inset 1px 1px #6c695e;
}
input.sunken {
    padding-left: 3px;
}
.combo {
    display: flex;
    align-items: center;
    position: relative;
    height: 20px;
}
.combo select {
    appearance: none;
    flex: 1;
    height: 16px;
    padding-left: 4px;
    opacity: 1;
}
.combo::after {
    content: "";
    position: absolute;
    top: 1px;
    right: 0;
    width: 16px;
    height: 17px;
    pointer-events: none;
    border: 1px solid;
    border-color: #fff #77746a #77746a #fff;
    background: conic-gradient(from -45deg at 50% 100%, #000 25%, transparent 0) center / 8px 4px no-repeat, #ebe6d8;
}
.toolbar-combo {
    width: 97px;
    margin: 0 4px 0 9px;
}

/* Arrow buttons of the scroll bars */
.arrow {
    flex: none;
    width: 17px;
    height: 17px;
    display: flex;
    align-items: center;
    justify-content: center;
    background: #ebe6d8;
    border: 1px solid;
    border-color: #fff #77746a #77746a #fff;
    box-shadow: inset -1px -1px #b4afa0;
    color: #a5a193;
}
.arrow::before {
    content: "";
    border: 4px solid transparent;
}
.arrow.up::before {
    border-top: none;
    border-bottom-color: currentColor;
}
.arrow.down::before {
    border-bottom: none;
    border-top-color: currentColor;
}
.arrow.left::before {
    border-left: none;
    border-right-color: currentColor;
}
.arrow.right::before {
    border-right: none;
    border-left-color: currentColor;
}
.arrow.big {
    width: 18px;
}
.arrow.big::before {
    border-width: 6px;
}
.arrow.big.up::before {
    border-top: none;
}
.arrow.big.down::before {
    border-bottom: none;
}
.arrow.wide {
    width: 44px;
}
.arrow.wide::before {
    display: none;
}
.arrow.wide svg {
    width: 30px;
    height: 12px;
}
.arrow.active {
    color: #000;
}
.vscroll, .hscroll {
    display: flex;
    background: repeating-conic-gradient(#ebe8dc 0 25%, #fff 0 50%) 0 0 / 2px 2px;
}
.vscroll {
    flex-direction: column;
    width: 17px;
}
.hscroll {
    height: 17px;
    gap: 1px;
}
.vscroll .last {
    margin-top: auto;
}
.hscroll .last {
    margin-left: auto;
}
.splitter {
    height: 6px;
    flex: none;
    background: #ebe6d8;
    border-bottom: 1px solid #77746a;
    border-top: 1px solid #fff;
}
.vsplitter {
    width: 4px;
    background: #ebe6d8;
    border-right: 1px solid #77746a;
}
.scroll-frame {
    flex: 1;
    min-height: 0;
    display: grid;
    grid-template-columns: 1fr 17px;
    grid-template-rows: 1fr 17px;
    border-top: 2px solid #8b8778;
    background: #fff;
}
.sizer {
    background: linear-gradient(135deg, #ebe6d8 54%, #a5a193 54% 59%, #fff 59% 63%, #ebe6d8 63% 68%, #a5a193 68% 73%, #fff 73% 77%, #ebe6d8 77% 82%, #a5a193 82% 87%, #ebe6d8 87%);
}

/* Main area */
main {
    flex: 1;
    min-height: 0;
    display: flex;
}
.sidebar {
    width: 158px;
    flex: none;
    display: flex;
    flex-direction: column;
    margin-right: 7px;
    border: solid;
    border-width: 1px 1px 1px 2px;
    border-color: #77746a #fff #fff #77746a;
    background: #dad6ce;
}
.group {
    flex: none;
    height: 23px;
    background: #ebe6d8;
    border: 1px solid;
    border-color: #fff #a39e90 #a39e90 #fff;
}
.shortcuts {
    flex: 1;
    min-height: 0;
    position: relative;
    overflow: hidden;
    padding-top: 8px;
    border-bottom: 5px solid #dad6ce;
}
.shortcut {
    width: 100%;
    display: block;
    margin-bottom: 13px;
    text-align: center;
}
.shortcut svg {
    width: 32px;
    height: 32px;
    margin: 0 auto 5px;
}
.more {
    position: absolute;
    right: 4px;
    bottom: 0;
}
.workspace {
    flex: 1;
    min-width: 0;
    position: relative;
    margin: 0 2px 2px 0;
    background: #808080;
    border-top: 1px solid #77746a;
}
.journal {
    position: absolute;
    inset: 0 0 8px 1px;
    display: flex;
    flex-direction: column;
    border: solid #7078cf;
    border-width: 0 4px 4px 0;
}
.journal-title {
    height: 27px;
    padding: 0 0 3px;
    background: linear-gradient(#7a90dc, #7a96df 50%, #84a6ec 85%, #7b90dc);
}
.journal .scroll-frame {
    border-left: 2px solid #8b8778;
    border-bottom: 1px solid #ebe6d8;
}
.journal-head {
    height: 17px;
    background: #ebe6d8;
    border: solid #77746a;
    border-width: 0 2px 2px 0;
}
.journal-selected {
    height: 16px;
    background: #2f66c4;
}

/* Model window */
.model {
    position: absolute;
    top: 1px;
    right: 158px;
    bottom: 204px;
    left: 2px;
    display: flex;
    flex-direction: column;
    padding-bottom: 1px;
    border: solid #7078cf;
    border-width: 0 4px 4px 3px;
    border-radius: 7px 7px 0 0;
    background: #ebe6d8;
    overflow: hidden;
}
.model .titlebar {
    margin: 0 -4px 0 -3px;
    padding: 2px 6px 0 5px;
}
.model-head {
    display: flex;
    flex: none;
    height: 66px;
    padding: 2px 4px 6px 4px;
    border-top: 1px solid #f6f3ea;
    border-bottom: 1px solid #a39e90;
}
.model-tools {
    width: 345px;
    flex: none;
    border-right: 1px solid #a39e90;
}
.tool-row {
    display: flex;
    gap: 4px;
}
.tool-row button {
    width: 44px;
    height: 28px;
    display: flex;
    align-items: center;
    justify-content: center;
    border: 1px solid;
    border-color: #fff #77746a #77746a #fff;
    box-shadow: inset -1px -1px #b4afa0;
}
.tool-row svg {
    width: 26px;
    height: 22px;
}
.account-box {
    width: 333px;
    height: 20px;
    margin-top: 2px;
    padding: 3px;
    border: 1px solid;
    border-color: #a39e90 #fff #fff #a39e90;
}
.model-fields {
    flex: 1;
    display: grid;
    grid-template-columns: 54px 1fr;
    grid-auto-rows: 20px;
    row-gap: 2px;
    align-content: start;
    align-items: center;
    padding: 4px 0 0 7px;
}
.model-fields input {
    height: 20px;
}
.model-fields label {
    display: flex;
    gap: 3px;
}
.shift {
    width: 14px;
    height: 12px;
}
.field-row {
    display: flex;
    align-items: center;
    gap: 3px;
}
.field-row .short {
    width: 58px;
}
.model-fields .disabled {
    width: 33px;
    color: #a5a193;
    text-shadow: 1px 1px #fff;
}
.type-combo {
    flex: 1;
    background: #ebe6d8;
    color: #a5a193;
    padding-left: 3px;
}
.type-combo select {
    padding-left: 0;
    text-shadow: 1px 1px #fff;
}
.type-combo svg {
    width: 16px;
    height: 14px;
}
.type-combo::after {
    background: conic-gradient(from -45deg at 50% 100%, #a5a193 25%, transparent 0) center / 8px 4px no-repeat, #ebe6d8;
}
.filters {
    flex: none;
    display: grid;
    grid-template-columns: 23px 58px 58px 58px 58px 106px 46px 77px 1fr;
    gap: 2px;
    height: 23px;
    padding: 2px 19px 2px 2px;
}
.filters .sunken {
    display: flex;
    align-items: center;
}
.filters div.sunken {
    padding-left: 2px;
}
.filters div input {
    flex: 1;
    width: 0;
}
.filters svg, .entries svg {
    width: 14px;
    height: 14px;
}
.filters svg.mini {
    width: 12px;
    height: 12px;
    margin-left: 2px;
}
.model .scroll-frame {
    margin: 0 2px;
}
.entries {
    width: 100%;
    height: 100%;
    table-layout: fixed;
    border-collapse: separate;
    border-spacing: 0;
}
.c-day {
    width: 25px;
}
.c-id {
    width: 60px;
}
.c-label {
    width: 108px;
}
.c-due {
    width: 48px;
}
.c-debit {
    width: 78px;
}
.entries th {
    height: 17px;
    padding: 0;
    font-weight: normal;
    white-space: nowrap;
    background: #ebe6d8;
    border: solid #77746a;
    border-width: 0 1px 1px 0;
    box-shadow: inset 1px 1px #fff;
}
.entries td {
    vertical-align: top;
    padding: 1px 4px;
    border-right: 1px solid #000;
}
.entries td:last-child {
    border-right: none;
}

/* Status bar */
.statusbar {
    flex: none;
    height: 12px;
    display: flex;
    gap: 3px;
    padding-left: 1px;
    border-top: 1px solid #fff;
    overflow: hidden;
}
.statusbar span {
    height: 18px;
    margin-top: 1px;
    padding: 2px 1px;
    border: 1px solid;
    border-color: #a39e90 #fff #fff #a39e90;
    white-space: nowrap;
}
.status-text {
    flex: 1;
}
.status-currency {
    width: 118px;
}
.status-small {
    width: 46px;
}

/* Account picker */
.dialog {
    position: absolute;
    top: 208px;
    left: calc(50% - 191px);
    width: 381px;
    border: solid #0a3fc4;
    border-width: 0 3px 3px;
    border-radius: 7px 7px 0 0;
    background: #ebe6d8;
}
.dialog .titlebar {
    margin: 0 -3px;
    padding: 3px 5px 0 6px;
    border-radius: 7px 7px 0 0;
    background: linear-gradient(#0831b4 0, #2a7cf8 2px, #0a56e4 6px, #0458ec 50%, #0668fc 85%, #0444c8 100%);
    color: #fff;
}
.dialog h2 {
    text-shadow: 1px 1px #0a2c8c;
}
.dialog .window-buttons button {
    border-color: #fff;
    background: linear-gradient(135deg, #ec9478, #dc4c28 50%, #c43c18);
}
.dialog-body {
    padding: 9px 4px 4px;
}
.list-labels {
    display: grid;
    grid-template-columns: 112px 1fr;
    padding-left: 1px;
}
.account-list {
    display: flex;
    height: 171px;
    padding: 1px 0 1px 1px;
    align-items: flex-start;
}
.account-list table {
    flex: 1;
    border-spacing: 0;
}
.account-list td {
    height: 14px;
    padding: 0 0 0 4px;
    line-height: 14px;
}
.account-list td:first-child {
    width: 108px;
}
.account-list .selected {
    background: #2f5fb8;
    color: #e6efff;
    outline: 1px dotted #101c50;
    outline-offset: -1px;
}
.account-list .vscroll {
    align-self: stretch;
}
.sort-row {
    display: flex;
    align-items: center;
    margin-top: 2px;
    padding-left: 1px;
}
.sort-row label {
    width: 130px;
}
.sort-combo {
    width: 100px;
}
.dialog-buttons {
    display: flex;
    gap: 34px;
    margin-top: 3px;
    padding-left: 55px;
}
.dialog-buttons button {
    width: 64px;
    height: 22px;
    border: 1px solid;
    border-color: #fff #77746a #77746a #fff;
    box-shadow: inset -1px -1px #b4afa0;
}
.dialog-buttons .default {
    border-color: #000;
    box-shadow: inset 1px 1px #fff, inset -1px -1px #77746a;
}
.halo {
    position: absolute;
    top: 95px;
    left: 48px;
    width: 58px;
    height: 58px;
    border-radius: 50%;
    background: #ff0;
    mix-blend-mode: multiply;
}
.pointer {
    position: absolute;
    top: 123px;
    left: 77px;
    width: 13px;
    height: 20px;
}
```
